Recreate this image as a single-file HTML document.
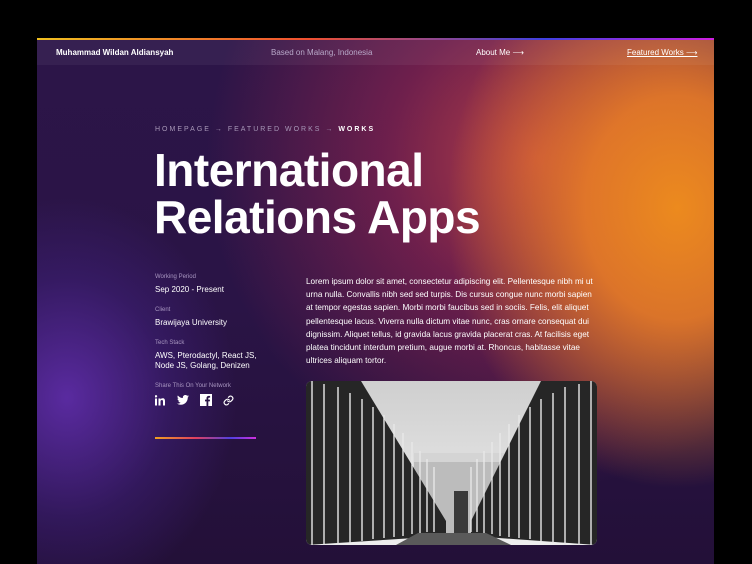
<!DOCTYPE html>
<html><head><meta charset="utf-8"><style>
*{margin:0;padding:0;box-sizing:border-box}
body{width:752px;height:564px;background:#000;overflow:hidden;font-family:"Liberation Sans",sans-serif;position:relative}
.frame{position:absolute;left:37px;top:38px;width:677px;height:526px;overflow:hidden;
background:
radial-gradient(ellipse 230px 280px at 640px 170px,rgba(236,138,30,1) 0%,rgba(232,125,38,.9) 40%,rgba(215,90,55,0) 100%),
radial-gradient(ellipse 330px 330px at 500px 120px,rgba(205,70,70,.85) 0%,rgba(165,40,80,.55) 45%,rgba(120,30,80,0) 100%),
radial-gradient(ellipse 170px 200px at 30px 360px,rgba(95,45,170,.9) 0%,rgba(70,35,140,.4) 60%,rgba(60,30,120,0) 100%),
linear-gradient(180deg,#2c1548 0%,#2a1446 50%,#231038 100%);}
.topline{position:absolute;left:0;top:0;width:677px;height:2px;background:linear-gradient(90deg,#f0c020,#f05030 40%,#4040e0 75%,#d020e0)}
.nav{position:absolute;left:0;top:2px;width:677px;height:25px;background:rgba(255,255,255,.05);font-size:8px;color:#fff}
.nav span{position:absolute;top:8px}
.crumb{position:absolute;left:118px;top:88px;font-size:7px;letter-spacing:2px;color:#a898b8}
.crumb b{color:#fff}
h1{position:absolute;left:117px;top:109px;font-size:46px;line-height:47px;font-weight:bold;color:#fff;letter-spacing:-0.5px}
.side{position:absolute;left:118px;top:236px;color:#fff}
.lab{font-size:6px;color:#a896c0;margin-bottom:5px}
.val{font-size:8px;line-height:10px;margin-bottom:12px}
.icons{display:flex;gap:11px;align-items:center;margin-top:4px}
.bar{position:absolute;left:118px;top:399px;width:101px;height:2px;background:linear-gradient(90deg,#f0a020,#e04060 40%,#5040e0 75%,#d030e0)}
.p{position:absolute;left:269px;top:237px;width:294px;font-size:8.2px;line-height:13.2px;color:#fff}
.img{position:absolute;left:269px;top:343px;width:291px;height:164px;border-radius:6px;overflow:hidden}
</style></head><body>
<div class="frame">
<div class="topline"></div>
<div class="nav">
<span style="left:19px;font-weight:bold">Muhammad Wildan Aldiansyah</span>
<span style="left:234px;color:#b8a8c8">Based on Malang, Indonesia</span>
<span style="left:439px">About Me ⟶</span>
<span style="left:590px;text-decoration:underline">Featured Works ⟶</span>
</div>
<div class="crumb">HOMEPAGE → FEATURED WORKS → <b>WORKS</b></div>
<h1>International<br>Relations Apps</h1>
<div class="side">
<div class="lab">Working Period</div><div class="val">Sep 2020 - Present</div>
<div class="lab">Client</div><div class="val">Brawijaya University</div>
<div class="lab">Tech Stack</div><div class="val">AWS, Pterodactyl, React JS,<br>Node JS, Golang, Denizen</div>
<div class="lab">Share This On Your Network</div>
<div class="icons">
<svg width="11" height="11" viewBox="0 0 11 11" fill="#fff"><rect x="0" y="3.5" width="2" height="7"/><circle cx="1" cy="1.3" r="1.2"/><path d="M3.5 3.5h2v1c.5-.8 1.3-1.2 2.2-1.2 1.6 0 2.3 1 2.3 2.8v4.4h-2V6.5c0-1-.3-1.5-1.1-1.5S5.5 5.6 5.5 6.6v3.9h-2z"/></svg>
<svg width="12" height="10" viewBox="0 0 24 20" fill="#fff"><path d="M24 2.4a10 10 0 0 1-2.8.8A5 5 0 0 0 23.3.4a10 10 0 0 1-3.1 1.2A4.9 4.9 0 0 0 11.8 6 14 14 0 0 1 1.7.9a4.9 4.9 0 0 0 1.5 6.6A4.9 4.9 0 0 1 1 6.9a4.9 4.9 0 0 0 3.9 4.8 5 5 0 0 1-2.2.1 4.9 4.9 0 0 0 4.6 3.4A9.9 9.9 0 0 1 0 17.3 14 14 0 0 0 7.5 19.5c9.1 0 14-7.5 14-14v-.6A10 10 0 0 0 24 2.4z"/></svg>
<svg width="12" height="12" viewBox="0 0 12 12"><rect width="12" height="12" fill="#fff"/><path d="M8.3 12V7.4h1.5l.2-1.8H8.3V4.5c0-.5.2-.9.9-.9h.9V2c-.2 0-.7-.1-1.3-.1-1.3 0-2.3.8-2.3 2.3v1.4H5v1.8h1.5V12z" fill="#2a1446"/></svg>
<svg width="11" height="11" viewBox="0 0 24 24" fill="none" stroke="#fff" stroke-width="2.5" stroke-linecap="round"><path d="M10 13a5 5 0 0 0 7.5.5l3-3a5 5 0 0 0-7-7l-1.7 1.7"/><path d="M14 11a5 5 0 0 0-7.5-.5l-3 3a5 5 0 0 0 7 7l1.7-1.7"/></svg>
</div>
</div>
<div class="bar"></div>
<div class="p">Lorem ipsum dolor sit amet, consectetur adipiscing elit. Pellentesque nibh mi ut urna nulla. Convallis nibh sed sed turpis. Dis cursus congue nunc morbi sapien at tempor egestas sapien. Morbi morbi faucibus sed in sociis. Felis, elit aliquet pellentesque lacus. Viverra nulla dictum vitae nunc, cras ornare consequat dui dignissim. Aliquet tellus, id gravida lacus gravida placerat cras. At facilisis eget platea tincidunt interdum pretium, augue morbi at. Rhoncus, habitasse vitae ultrices aliquam tortor.</div>
<div class="img"><svg width="291" height="164" viewBox="0 0 291 164">
<defs><linearGradient id="sky" x1="0" y1="0" x2="0" y2="1"><stop offset="0" stop-color="#cfcfcf"/><stop offset="1" stop-color="#eeeeee"/></linearGradient></defs>
<rect width="291" height="164" fill="url(#sky)"/>
<rect x="108" y="72" width="90" height="80" fill="#bcbcbc"/>
<rect x="108" y="72" width="90" height="9" fill="#d4d4d4"/>
<rect x="148" y="110" width="14" height="42" fill="#3a3a3a"/>
<polygon points="0,0 55,0 140,140 140,155 0,164" fill="#262626"/>
<polygon points="291,0 235,0 165,140 165,155 291,164" fill="#262626"/>
<polygon points="112,152 180,152 205,164 90,164" fill="#5a5a5a"/>
<g stroke="#e8e8e8" stroke-width="1.4">
<line x1="6" y1="0" x2="6" y2="164"/><line x1="18" y1="3" x2="18" y2="164"/><line x1="32" y1="6" x2="32" y2="164"/><line x1="44" y1="12" x2="44" y2="162"/><line x1="56" y1="18" x2="56" y2="160"/><line x1="67" y1="26" x2="67" y2="158"/><line x1="78" y1="34" x2="78" y2="157"/><line x1="88" y1="43" x2="88" y2="156"/><line x1="97" y1="52" x2="97" y2="155"/><line x1="106" y1="61" x2="106" y2="153"/><line x1="114" y1="70" x2="114" y2="152"/><line x1="121" y1="78" x2="121" y2="151"/><line x1="128" y1="86" x2="128" y2="151"/>
<line x1="285" y1="0" x2="285" y2="164"/><line x1="273" y1="3" x2="273" y2="164"/><line x1="259" y1="6" x2="259" y2="164"/><line x1="247" y1="12" x2="247" y2="162"/><line x1="235" y1="18" x2="235" y2="160"/><line x1="224" y1="26" x2="224" y2="158"/><line x1="213" y1="34" x2="213" y2="157"/><line x1="203" y1="43" x2="203" y2="156"/><line x1="194" y1="52" x2="194" y2="155"/><line x1="186" y1="61" x2="186" y2="153"/><line x1="178" y1="70" x2="178" y2="152"/><line x1="171" y1="78" x2="171" y2="151"/><line x1="165" y1="86" x2="165" y2="151"/>
</g>
</svg></div>
</div>
</body></html>
